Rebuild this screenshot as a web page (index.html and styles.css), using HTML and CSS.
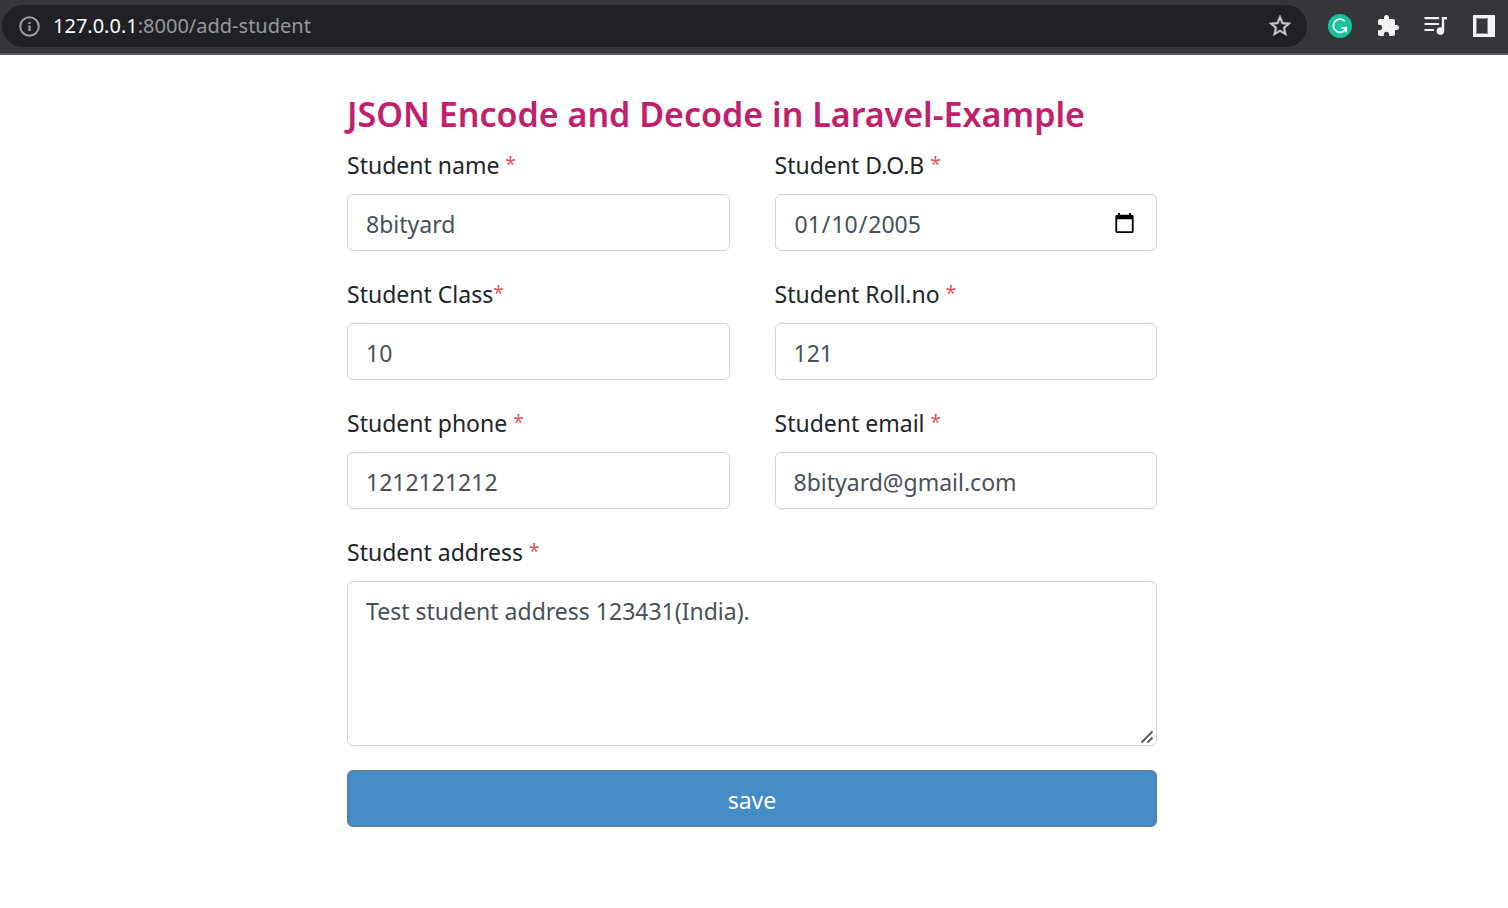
FILE: index.html
```html
<!DOCTYPE html>
<html lang="en-US">
<head>
  <meta charset="UTF-8">
  <title>Add Student</title>
  <link rel="stylesheet" href="styles.css">
</head>
<body>

  <header class="toolbar">
    <div class="omnibox">
      <button class="icon-btn" type="button" aria-label="Site information">
        <svg class="info-icon" viewBox="0 0 22 22" width="22" height="22">
          <circle cx="11.5" cy="11.5" r="9.3" fill="none" stroke="currentColor" stroke-width="2"/>
          <path d="M10.4 10.5h2.2v5.5h-2.2zM10.4 7h2.2v2h-2.2z" fill="currentColor"/>
        </svg>
      </button>
      <div class="url"><span class="url-host">127.0.0.1</span>:8000/add-student</div>
      <button class="icon-btn" type="button" aria-label="Bookmark this page">
        <svg class="star-icon" viewBox="1 1 22 22" width="24" height="24">
          <path fill="currentColor" stroke="currentColor" stroke-width=".4" d="M22 9.24l-7.19-.62L12 2 9.19 8.63 2 9.24l5.46 4.73L5.82 21 12 17.27 18.18 21l-1.63-7.03L22 9.24zM12 15.4l-3.76 2.27 1-4.28-3.32-2.88 4.38-.38L12 6.1l1.71 4.04 4.38.38-3.32 2.88 1 4.28L12 15.4z"/>
        </svg>
      </button>
    </div>
    <div class="extensions">
      <button class="icon-btn" type="button" aria-label="Grammar checker">
        <svg viewBox="0 0 24 24" width="24" height="24">
          <circle cx="12" cy="12" r="12" fill="#15c39a"/>
          <path d="M16.8 7.3A6.6 6.6 0 1 0 18.2 13.8H13.6M16.2 15l2-1.2v4.6" fill="none" stroke="#fff" stroke-width="1.7"/>
        </svg>
      </button>
      <button class="icon-btn" type="button" aria-label="Extensions">
        <svg viewBox="0 0 24 24" width="24" height="24">
          <path fill="currentColor" d="M20.5 11H19V7c0-1.1-.9-2-2-2h-4V3.5a2.5 2.5 0 0 0-5 0V5H4c-1.1 0-1.99.9-1.99 2v3.8H3.5c1.49 0 2.7 1.21 2.7 2.7s-1.21 2.7-2.7 2.7H2V20c0 1.1.9 2 2 2h3.8v-1.5c0-1.49 1.21-2.7 2.7-2.7s2.7 1.21 2.7 2.7V22H17c1.1 0 2-.9 2-2v-4h1.5a2.5 2.5 0 0 0 0-5z"/>
        </svg>
      </button>
      <button class="icon-btn" type="button" aria-label="Media controls">
        <svg viewBox="0 0 24 24" width="24" height="24">
          <g stroke="currentColor" stroke-width="2.2" stroke-linecap="round" fill="none">
            <path d="M1.3 4.1h12.9M1.3 10h12.9M1.3 16h7.9"/>
            <path d="M19 17V4.200h4" stroke-width="2.400" stroke-linecap="butt"/>
          </g>
          <circle cx="16.4" cy="17.1" r="3.8" fill="currentColor"/>
        </svg>
      </button>
      <button class="icon-btn" type="button" aria-label="Side panel">
        <svg viewBox="0 0 24 24" width="24" height="24">
          <path fill="currentColor" fill-rule="evenodd" d="M1 1h22v22H1zM4 4v16h12V4z"/>
          <path fill="none" stroke="#8b8c8f" d="M4.5 4.5h11v15h-11z"/>
        </svg>
      </button>
    </div>
  </header>

  <main class="page">
    <form class="student-form">
      <h1>JSON Encode and Decode in Laravel-Example</h1>
      <div class="fields">
        <div class="field">
          <label for="name">Student name <span class="required">*</span></label>
          <input type="text" id="name" name="name" value="8bityard">
        </div>
        <div class="field">
          <label for="dob">Student D.O.B <span class="required">*</span></label>
          <input type="date" id="dob" name="dob" value="2005-01-10">
        </div>
        <div class="field">
          <label for="class">Student Class<span class="required">*</span></label>
          <input type="text" id="class" name="class" value="10">
        </div>
        <div class="field">
          <label for="roll">Student Roll.no <span class="required">*</span></label>
          <input type="text" id="roll" name="roll" value="121">
        </div>
        <div class="field">
          <label for="phone">Student phone <span class="required">*</span></label>
          <input type="text" id="phone" name="phone" value="1212121212">
        </div>
        <div class="field">
          <label for="email">Student email <span class="required">*</span></label>
          <input type="email" id="email" name="email" value="8bityard@gmail.com">
        </div>
        <div class="field wide">
          <label for="address">Student address <span class="required">*</span></label>
          <div class="textarea-wrap">
            <textarea id="address" name="address">Test student address 123431(India).</textarea>
            <svg class="grip" viewBox="0 0 14 14" width="14" height="14" aria-hidden="true">
              <path d="M1.5 12.5l11-11M7.500 12.500l5-5" fill="none" stroke="#55565a" stroke-width="1.8"/>
            </svg>
          </div>
        </div>
        <button class="save wide" type="submit">save</button>
      </div>
    </form>
  </main>

</body>
</html>
```
FILE: styles.css
```css
* {
  box-sizing: border-box;
}

body {
  margin: 0;
  background: #fff;
  color: #212529;
  font-family: "Noto Sans", "Open Sans", sans-serif;
  font-size: 23px;
  line-height: 36px;
}

.toolbar {
  display: flex;
  align-items: center;
  gap: 21px;
  padding: 5px 12px 6px 2px;
  background: #35363a;
  border-bottom: 2px solid #5d5c60;
}

.omnibox {
  display: flex;
  flex: 1;
  align-items: center;
  height: 42px;
  padding: 0 15px 0 16px;
  border-radius: 21px;
  background: #202124;
}

.url {
  flex: 1;
  margin-left: 13px;
  color: #96999d;
  font-size: 20px;
}

.url-host {
  color: #fff;
}

.extensions {
  display: flex;
  gap: 24px;
}

.icon-btn {
  display: flex;
  padding: 0;
  border: 0;
  background: none;
  color: #f1f3f4;
}

.info-icon {
  color: #9aa0a6;
}

.star-icon {
  color: #c4c7ca;
}

.page {
  padding: 37px 4px 36px 0;
}

.student-form {
  max-width: 810px;
  margin: 0 auto;
}

h1 {
  margin: 0 0 11px;
  color: #c2206c;
  font-size: 34px;
  font-weight: 600;
  line-height: 44px;
}

.fields {
  display: grid;
  grid-template-columns: 1fr 1fr;
  gap: 24px 45px;
}

.field {
  display: flex;
  flex-direction: column;
  gap: 11px;
  min-width: 0;
}

.field:not(.wide) {
  margin-bottom: 1px;
}

.field label {
  height: 36px;
}

.wide {
  grid-column: 1 / -1;
}

.required {
  color: #e05260;
  font-size: 19px;
  line-height: 1;
  vertical-align: 3px;
}

input,
textarea {
  width: 100%;
  height: 57px;
  padding: 10px 18px 8px;
  border: 1px solid #ced4da;
  border-radius: 6px;
  background: #fff;
  color: #495057;
  font: inherit;
}

.textarea-wrap {
  position: relative;
}

textarea {
  display: block;
  height: 165px;
  padding-top: 11px;
  resize: vertical;
}

textarea::-webkit-resizer {
  background: none;
}

.grip {
  position: absolute;
  right: 3px;
  bottom: 2px;
  pointer-events: none;
}

.save {
  height: 57px;
  padding: 3px 18px 0;
  border: 1px solid #6c757d;
  border-radius: 6px;
  background: #458bc6;
  color: #fff;
  font: inherit;
}
```
